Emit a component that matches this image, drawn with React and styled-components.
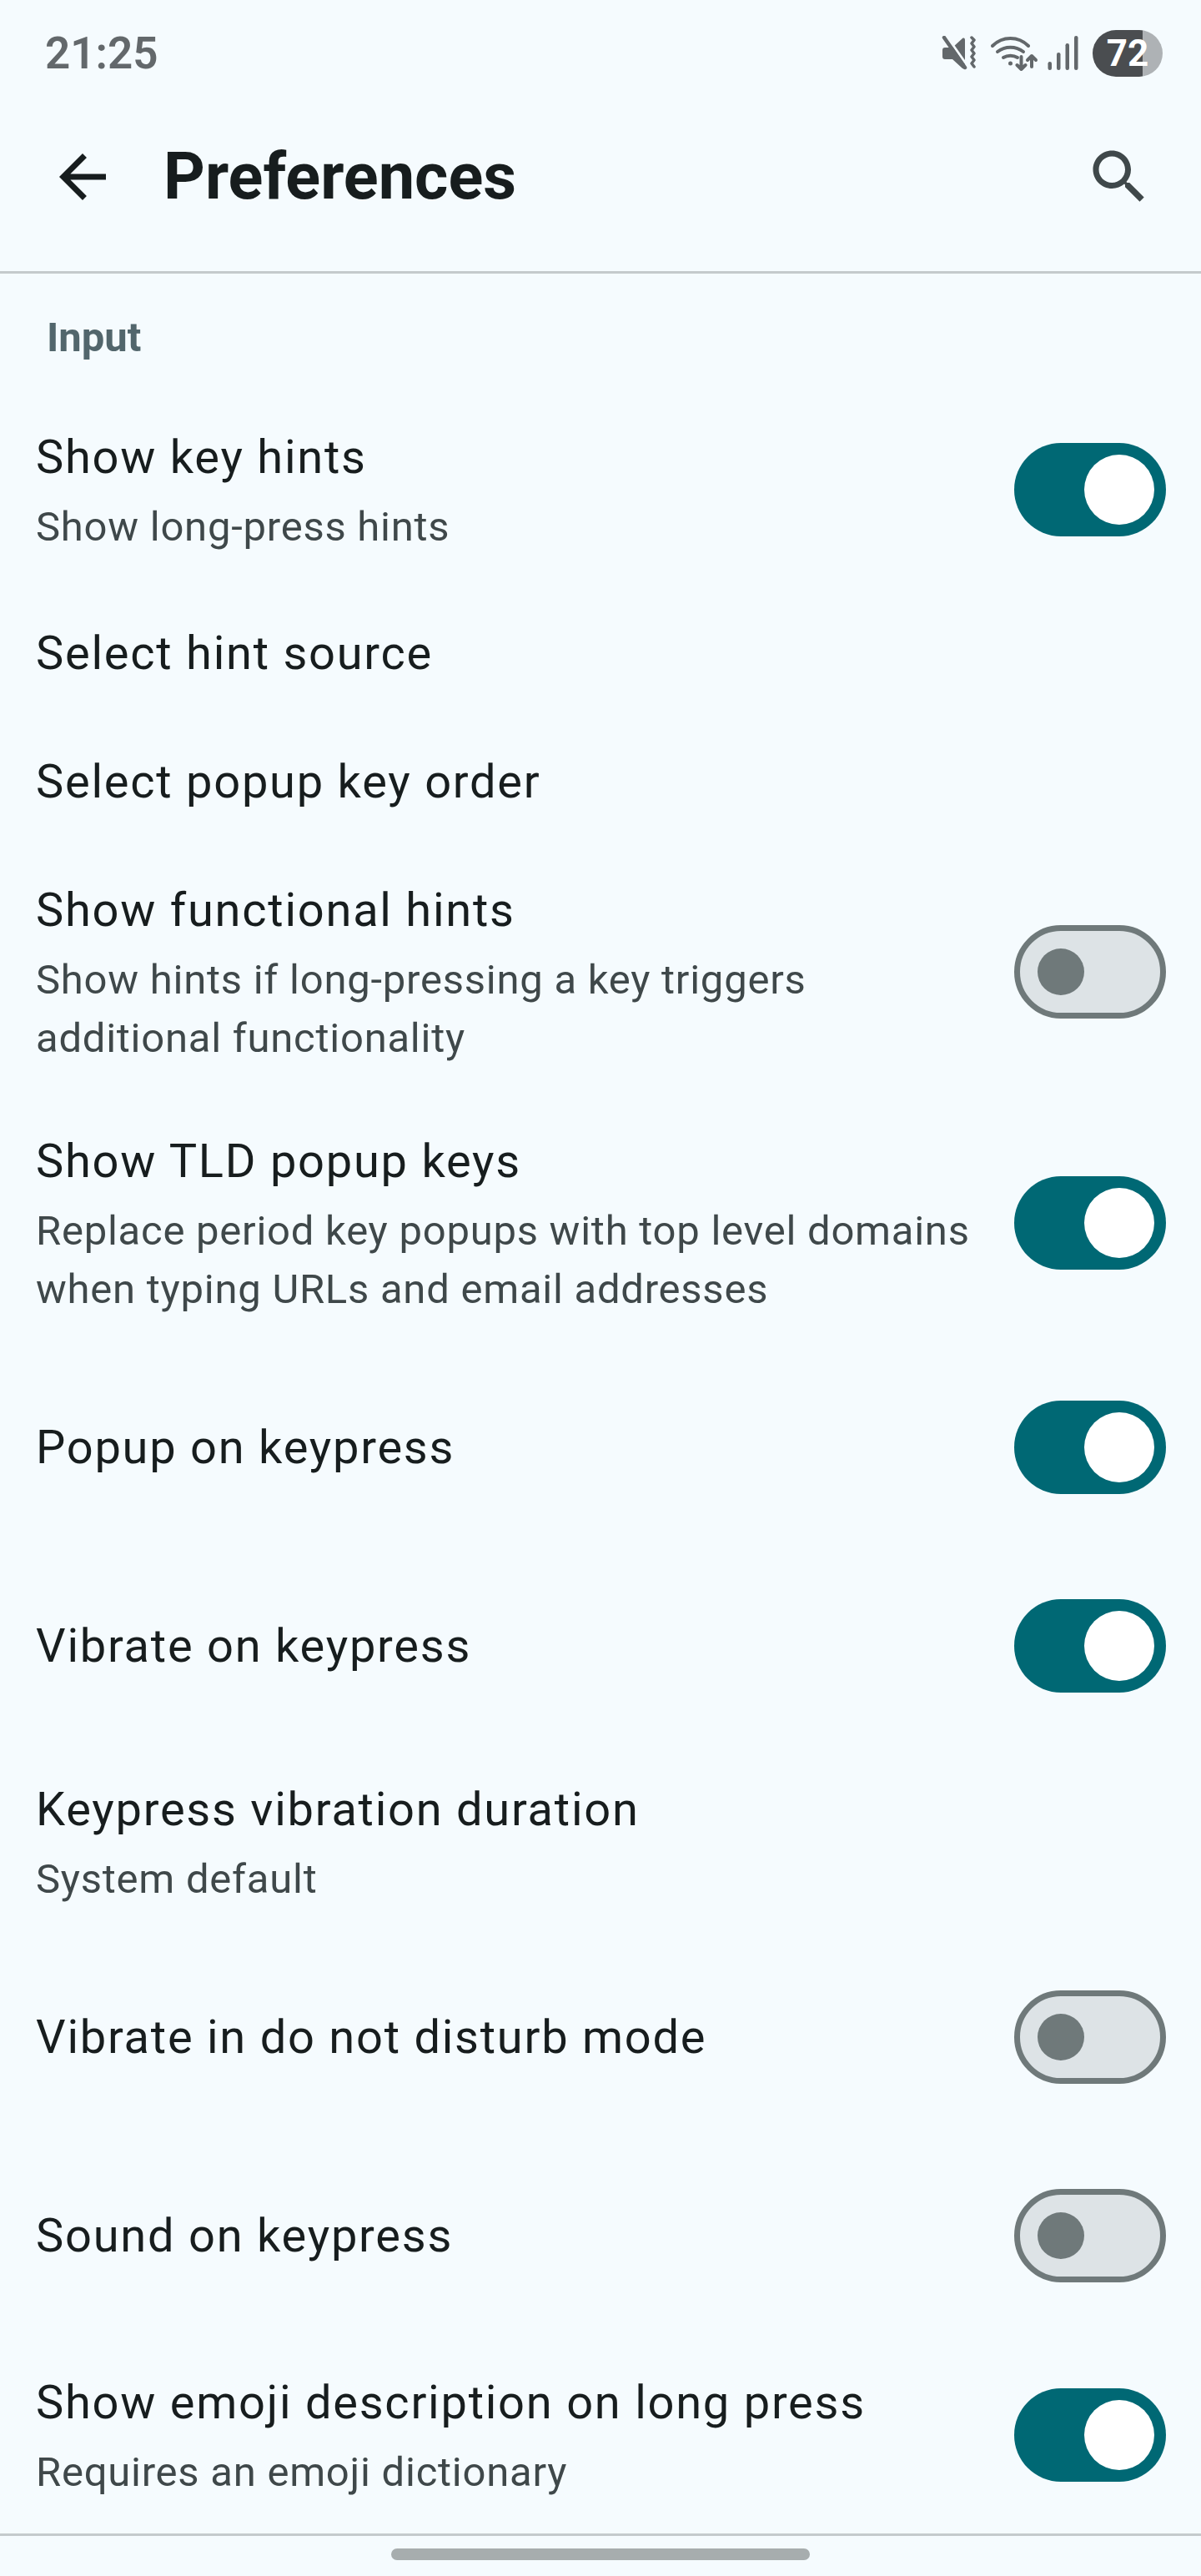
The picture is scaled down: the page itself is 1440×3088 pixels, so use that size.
import React from 'react';
import styled, { createGlobalStyle } from 'styled-components';

const items = [
  { title: 'Show key hints', summary: ['Show long-press hints'], on: true },
  { title: 'Select hint source' },
  { title: 'Select popup key order' },
  {
    title: 'Show functional hints',
    summary: ['Show hints if long-pressing a key triggers', 'additional functionality'],
    on: false,
  },
  {
    title: 'Show TLD popup keys',
    summary: ['Replace period key popups with top level domains', 'when typing URLs and email addresses'],
    on: true,
  },
  { title: 'Popup on keypress', on: true },
  { title: 'Vibrate on keypress', on: true },
  { title: 'Keypress vibration duration', summary: ['System default'] },
  { title: 'Vibrate in do not disturb mode', on: false },
  { title: 'Sound on keypress', on: false },
  { title: 'Show emoji description on long press', summary: ['Requires an emoji dictionary'], on: true },
];

const App = () => {
  return (
    <>
      <GlobalStyle />
      <Screen>
        <StatusBar>
          <Time>21:25</Time>
          <StatusIcons>
            <MuteIcon />
            <WifiIcon />
            <SignalIcon />
            <Battery>72</Battery>
          </StatusIcons>
        </StatusBar>

        <Header>
          <HeaderIcon viewBox="0 0 24 24" $color="#171d1e">
            <path d="M20 11H7.83l5.59-5.59L12 4l-8 8 8 8 1.41-1.41L7.83 13H20v-2z" />
          </HeaderIcon>
          <Title>Preferences</Title>
          <HeaderIcon viewBox="0 0 24 24" $color="#3f484a">
            <path d="M15.5 14h-.79l-.28-.27C15.41 12.59 16 11.11 16 9.5 16 5.91 13.09 3 9.5 3S3 5.91 3 9.5 5.91 16 9.5 16c1.61 0 3.09-.59 4.23-1.57l.27.28v.79l5 4.99L20.49 19l-4.99-5zm-6 0C7.01 14 5 11.99 5 9.5S7.01 5 9.5 5 14 7.01 14 9.5 11.99 14 9.5 14z" />
          </HeaderIcon>
        </Header>

        <List>
          <SectionLabel>Input</SectionLabel>
          {items.map((item) => (
            <Row key={item.title} $tall={item.on !== undefined && !item.summary}>
              <RowText>
                <RowTitle>{item.title}</RowTitle>
                {item.summary?.map((line) => (
                  <RowSummary key={line}>{line}</RowSummary>
                ))}
              </RowText>
              {item.on !== undefined && (
                <Switch $on={item.on}>
                  <Thumb $on={item.on} />
                </Switch>
              )}
            </Row>
          ))}
        </List>

        <NavBar>
          <NavPill />
        </NavBar>
      </Screen>
    </>
  );
};

const MuteIcon = () => (
  <svg width="41" height="42" viewBox="0 0 41 42" fill="#63686b">
    <path d="M1 17c0-2 1-3 3-3h9L25 3c2-1 3 0 3 2v32c0 2-1 3-3 2L13 28H4c-2 0-3-1-3-3z" />
    <path d="M6.5 1l26 37" stroke="#f5fbfe" strokeWidth="3" />
    <path d="M3 2l25 36" stroke="#63686b" strokeWidth="4.5" strokeLinecap="round" />
    <path
      d="M36 2l3 3-3 4 3 4-3 4 3 4-3 4 3 4-3 4 3 4"
      fill="none"
      stroke="#63686b"
      strokeWidth="3.5"
      strokeLinecap="round"
      strokeLinejoin="round"
    />
  </svg>
);

const WifiIcon = () => (
  <svg width="57" height="42" viewBox="0 0 57 42" fill="none" stroke="#63686b" strokeWidth="4" strokeLinecap="round" strokeLinejoin="round">
    <path d="M2 12C14 0 33 0 45 12" />
    <path d="M8 19c9-7 22-7 31 0" />
    <path d="M15 26c5-3 12-3 17 0" />
    <circle cx="23.5" cy="33" r="2.5" fill="#63686b" stroke="none" />
    <path d="M36.5 25v15M31.5 35l5 5 5-5" />
    <path d="M49 37V24M44 29l5-5 5 5" />
  </svg>
);

const SignalIcon = () => (
  <svg width="37" height="42" viewBox="0 0 37 42" fill="#63686b">
    <rect x="0.5" y="31" width="4.5" height="10" rx="2.2" />
    <rect x="11" y="20" width="4.5" height="21" rx="2.2" />
    <rect x="21.5" y="9" width="4.5" height="32" rx="2.2" />
    <rect x="32" y="0" width="4.5" height="41" rx="2.2" />
  </svg>
);

const GlobalStyle = createGlobalStyle`
  html, body {
    margin: 0;
    padding: 0;
    background: #f5fbfe;
  }
`;

const Screen = styled.div`
  width: 1440px;
  height: 3088px;
  display: flex;
  flex-direction: column;
  overflow: hidden;
  background: #f5fbfe;
  font-family: Roboto, "Liberation Sans", sans-serif;
`;

const StatusBar = styled.div`
  height: 128px;
  box-sizing: border-box;
  padding: 36px 46px 0 54px;
  display: flex;
  justify-content: space-between;
  align-items: flex-start;
`;

const Time = styled.div`
  font-size: 53px;
  line-height: 56px;
  font-weight: 600;
  color: #63686b;
`;

const StatusIcons = styled.div`
  display: flex;
  align-items: center;
  height: 56px;

  > svg:nth-child(1) {
    margin-right: 18px;
  }
  > svg:nth-child(2) {
    margin-right: 11px;
  }
  > svg:nth-child(3) {
    margin-right: 17px;
  }
`;

const Battery = styled.div`
  width: 84px;
  height: 56px;
  border-radius: 28px;
  display: flex;
  align-items: center;
  justify-content: center;
  font-size: 44px;
  font-weight: 700;
  color: #fff;
  background: linear-gradient(to right, #4a4d50 71.4%, #aeb2b5 71.4%);
`;

const Header = styled.header`
  height: 200px;
  box-sizing: border-box;
  padding: 42px 56px 71px 57px;
  display: flex;
  align-items: center;
  border-bottom: 3px solid #c4cacc;
`;

const HeaderIcon = styled.svg`
  width: 84px;
  height: 84px;
  flex: none;
  fill: ${(props) => props.$color};
`;

const Title = styled.h1`
  flex: 1;
  margin: 0 0 0 55px;
  font-size: 77.5px;
  line-height: 84px;
  font-weight: 700;
  color: #171d1e;
`;

const List = styled.div`
  flex: 1;
  min-height: 0;
  overflow: hidden;
`;

const SectionLabel = styled.div`
  height: 143px;
  box-sizing: border-box;
  padding: 49px 56px 0;
  font-size: 49px;
  line-height: 56px;
  font-weight: 700;
  color: #52666c;
`;

const Row = styled.div`
  display: flex;
  align-items: center;
  box-sizing: border-box;
  min-height: ${(props) => (props.$tall ? '238px' : '154px')};
  padding: 35px 42px 35px 43px;
  gap: 40px;

  ${SectionLabel} + & {
    padding-bottom: 39px;
  }

  &:last-child {
    padding-top: 39px;
  }
`;

const RowText = styled.div`
  flex: 1;
  min-width: 0;
`;

const RowTitle = styled.div`
  font-size: 56px;
  line-height: 84px;
  letter-spacing: 1.75px;
  color: #171d1e;
`;

const RowSummary = styled.div`
  font-size: 49px;
  line-height: 70px;
  letter-spacing: 0.75px;
  white-space: nowrap;
  color: #3f484a;
  &:nth-child(2) {
    margin-top: 7px;
  }
`;

const Switch = styled.div`
  width: 182px;
  height: 112px;
  flex: none;
  box-sizing: border-box;
  border-radius: 56px;
  display: flex;
  align-items: center;
  background: ${(props) => (props.$on ? '#006874' : '#dde3e6')};
  border: ${(props) => (props.$on ? 'none' : '7px solid #6f797a')};
  padding: ${(props) => (props.$on ? '0 14px' : '0 21px')};
  justify-content: ${(props) => (props.$on ? 'flex-end' : 'flex-start')};
`;

const Thumb = styled.div`
  width: ${(props) => (props.$on ? '84px' : '56px')};
  height: ${(props) => (props.$on ? '84px' : '56px')};
  border-radius: 50%;
  background: ${(props) => (props.$on ? '#ffffff' : '#6f797a')};
`;

const NavBar = styled.div`
  height: 51px;
  box-sizing: border-box;
  border-top: 3px solid #c4cacc;
  padding-top: 15px;
  display: flex;
  justify-content: center;
  flex: none;
`;

const NavPill = styled.div`
  width: 502px;
  height: 14px;
  border-radius: 7px;
  background: #a7adae;
`;

export default App;
